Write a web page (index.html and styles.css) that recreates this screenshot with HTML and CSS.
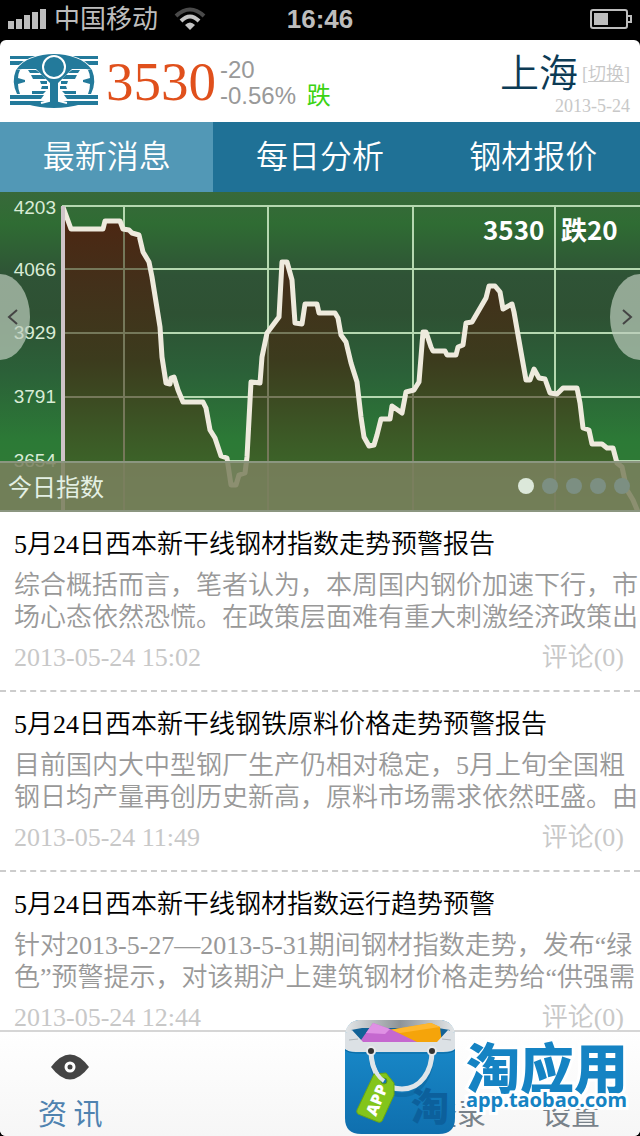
FILE: index.html
```html
<!DOCTYPE html>
<html lang="zh-CN">
<head>
    <meta charset="UTF-8">
    <meta name="viewport" content="width=device-width, initial-scale=1.0">
    <title>钢材指数</title>
    <link rel="stylesheet" href="styles.css">
</head>
<body>
    <div class="status-bar">
        <div class="carrier">
            <svg class="signal" viewBox="0 0 38 20" aria-hidden="true">
                <path d="M0 12h6v8H0zM8 10h6v10H8zM16 6h6v14h-6zM24 3h6v17h-6zM32 0h6v20h-6z" fill="#bdbdbd"/>
            </svg>
            <span>中国移动</span>
            <svg class="wifi" viewBox="0 0 32 24" aria-hidden="true">
                <path d="M2 9Q16-4 30 9" fill="none" stroke="#4a4a4a" stroke-width="4"/>
                <path d="M7 14Q16 5 25 14" fill="none" stroke="#c4c4c4" stroke-width="4"/>
                <path d="M11 18Q16 13 21 18L16 23z" fill="#c4c4c4"/>
            </svg>
        </div>
        <time class="clock">16:46</time>
        <svg class="battery" viewBox="0 0 42 20" aria-hidden="true">
            <rect x="1" y="1" width="36" height="18" rx="2" fill="none" stroke="#bdbdbd" stroke-width="2"/>
            <path d="M4 4h14v12H4z" fill="#bdbdbd"/>
            <path d="M37 7h4v6h-4" fill="none" stroke="#bdbdbd" stroke-width="2"/>
        </svg>
    </div>

    <div class="screen">
        <header class="header">
            <svg class="logo" viewBox="0 0 88 54" aria-label="西本新干线">
                <g fill="#237a9b">
                    <path d="M0 2h88v3H0zM0 7h88v4H0z"/>
                    <ellipse cx="44" cy="27" rx="43" ry="28" fill="#fff"/>
                    <path d="M0 41h34l-3 4H0zM88 41H54l3 4h31zM0 47h88v4H0z"/>
                    <path d="M16 50Q44 43 72 50Q58 54 44 54T16 50z"/>
                    <path d="M6 16C13 5 29 0 44 0s31 5 38 16l-6-1H62L48 29v24h-8V29L26 15H12z"/>
                    <path d="M18 16h8l4 3H20zM21 21h11l4 4H23zM30 27h7v3h-6zM32 32h6v3h-7zM22 37h14l-3 3H22z"/>
                    <path d="M70 16h-8l-4 3h10zM67 21H56l-4 4h13zM58 27h-7v3h6zM56 32h-6v3h7zM66 37H52l3 3h11z"/>
                    <path d="M6 16q-5 12 1 24h3q-2-5-2-10l7-2v-2l-7-2q0-4 2-8zM82 16q5 12-1 24h-3q2-5 2-10l-7-2v-2l7-2q0-4-2-8z"/>
                </g>
                <path d="M39 37v10l-8 2M49 37v10l8 2" fill="none" stroke="#fff" stroke-width="2"/>
                <circle cx="44" cy="13" r="11" fill="#237a9b" stroke="#fff" stroke-width="2"/>
            </svg>
            <strong class="index-value">3530</strong>
            <div class="change">
                <span>-20</span>
                <span>-0.56% <b class="fall">跌</b></span>
            </div>
            <div class="place">
                <div class="city">上海 <span class="switch">[<a href="#city">切换</a>]</span></div>
                <time class="today">2013-5-24</time>
            </div>
        </header>

        <nav class="tabs">
            <a class="tab active" href="#news">最新消息</a>
            <a class="tab" href="#analysis">每日分析</a>
            <a class="tab" href="#prices">钢材报价</a>
        </nav>

        <section class="slider">
            <svg class="chart" viewBox="0 0 640 320" role="img" aria-label="今日指数">
                <defs>
                    <linearGradient id="sky" x1="0" y1="0" x2="0" y2="1">
                        <stop offset="0" stop-color="#38693a"/>
                        <stop offset=".1" stop-color="#2f6c33"/>
                        <stop offset=".26" stop-color="#2f5336"/>
                        <stop offset=".38" stop-color="#2e5133"/>
                        <stop offset=".56" stop-color="#2b6038"/>
                        <stop offset=".78" stop-color="#2c7a36"/>
                        <stop offset="1" stop-color="#347a36"/>
                    </linearGradient>
                    <linearGradient id="area" gradientUnits="userSpaceOnUse" x1="0" y1="15" x2="0" y2="320">
                        <stop offset="0" stop-color="#4e2511"/>
                        <stop offset=".25" stop-color="#43301a"/>
                        <stop offset=".5" stop-color="#3c3b1d"/>
                        <stop offset=".75" stop-color="#3c5926"/>
                        <stop offset="1" stop-color="#3c742d"/>
                    </linearGradient>
                </defs>
                <rect width="640" height="320" fill="url(#sky)"/>
                <path class="grid" d="M62 14H640M62 77H640M62 141H640M62 205H640M62 269H640M124 14V320M268 14V320M413 14V320M555 14V320"/>
                <path class="fill" d="M63 15L71 37H103L105 29H120L123 37 129 38 132 41 139 43 143 60 149 70 152 85 160 135 162 165 166 191 170 192 171 186 174 185 178 198 183 210H203L206 216 210 238 215 246 221 264 227 266 231 293H236L239 283 245 281 247 265 251 190 260 191 262 165 267 141 279 125 282 70H287L292 88 295 131 302 132 305 112H317L319 121H335L338 126 341 143 346 150 351 171 357 190 361 225 364 245 369 254 374 253 377 243 381 227H390L392 214 402 221 406 200 414 198 419 190 423 140H426L431 155 433 159H445L447 163H456L458 155 463 153 466 131 472 130 486 106 489 94H495L500 100 503 117 512 112 514 120 521 160 526 188H530L534 177 539 186 545 187 550 201 557 202 563 196H577L580 211 583 236 589 238 592 252H602L607 256H613L617 271 622 275 627 298 633 308 638 320H63z"/>
                <path class="grid faint" d="M62 77H152M62 141H161M62 205H182M124 37V320M267 141H341M250 205H360M413 198V320M268 141V320M404 205H579M555 202V320M460 141H518"/>
                <path class="curve" d="M63 15L71 37H103L105 29H120L123 37 129 38 132 41 139 43 143 60 149 70 152 85 160 135 162 165 166 191 170 192 171 186 174 185 178 198 183 210H203L206 216 210 238 215 246 221 264 227 266 231 293H236L239 283 245 281 247 265 251 190 260 191 262 165 267 141 279 125 282 70H287L292 88 295 131 302 132 305 112H317L319 121H335L338 126 341 143 346 150 351 171 357 190 361 225 364 245 369 254 374 253 377 243 381 227H390L392 214 402 221 406 200 414 198 419 190 423 140H426L431 155 433 159H445L447 163H456L458 155 463 153 466 131 472 130 486 106 489 94H495L500 100 503 117 512 112 514 120 521 160 526 188H530L534 177 539 186 545 187 550 201 557 202 563 196H577L580 211 583 236 589 238 592 252H602L607 256H613L617 271 622 275 627 298 633 308 638 320"/>
                <path class="axis" d="M63 14V320"/>
                <g class="scale">
                    <text x="56" y="22">4203</text>
                    <text x="56" y="84">4066</text>
                    <text x="56" y="147">3929</text>
                    <text x="56" y="211">3791</text>
                    <text x="56" y="275">3654</text>
                </g>
                <text class="quote" x="483" y="48">3530</text>
                <text class="quote" x="561" y="48">跌20</text>
            </svg>
            <button class="arrow prev" aria-label="上一张">
                <svg viewBox="0 0 12 18" aria-hidden="true"><path d="M10 2L2 9l8 7"/></svg>
            </button>
            <button class="arrow next" aria-label="下一张">
                <svg viewBox="0 0 12 18" aria-hidden="true"><path d="M2 2l8 7-8 7"/></svg>
            </button>
            <div class="caption">
                <span>今日指数</span>
                <div class="dots">
                    <i class="dot on"></i>
                    <i class="dot"></i>
                    <i class="dot"></i>
                    <i class="dot"></i>
                    <i class="dot"></i>
                </div>
            </div>
        </section>

        <main class="news">
            <article class="item">
                <h2>5月24日西本新干线钢材指数走势预警报告</h2>
                <p>综合概括而言，笔者认为，本周国内钢价加速下行，市场心态依然恐慌。在政策层面难有重大刺激经济政策出</p>
                <div class="meta"><time>2013-05-24 15:02</time><span>评论(0)</span></div>
            </article>
            <article class="item">
                <h2>5月24日西本新干线钢铁原料价格走势预警报告</h2>
                <p>目前国内大中型钢厂生产仍相对稳定，5月上旬全国粗钢日均产量再创历史新高，原料市场需求依然旺盛。由</p>
                <div class="meta"><time>2013-05-24 11:49</time><span>评论(0)</span></div>
            </article>
            <article class="item">
                <h2>5月24日西本新干线钢材指数运行趋势预警</h2>
                <p>针对2013-5-27—2013-5-31期间钢材指数走势，发布“绿色”预警提示，对该期沪上建筑钢材价格走势给“供强需</p>
                <div class="meta"><time>2013-05-24 12:44</time><span>评论(0)</span></div>
            </article>
        </main>

        <nav class="toolbar">
            <a class="tool current" href="#info">
                <svg class="eye" viewBox="0 0 38 26" aria-hidden="true">
                    <path d="M0 13Q19-12 38 13Q19 38 0 13z" fill="#444"/>
                    <circle cx="19" cy="13" r="4" fill="#444" stroke="#fff" stroke-width="3"/>
                </svg>
                <span>资 讯</span>
            </a>
            <a class="tool login" href="#login"><span>登录</span></a>
            <a class="tool" href="#settings"><span>设置</span></a>
        </nav>

        <div class="badge">
            <svg class="bag" viewBox="0 0 112 116" aria-hidden="true">
                <defs>
                    <linearGradient id="bagBlue" x1="0" y1="0" x2="0" y2="1">
                        <stop offset="0" stop-color="#1b8fcf"/>
                        <stop offset="1" stop-color="#0f6fae"/>
                    </linearGradient>
                    <linearGradient id="rim" x1="0" y1="0" x2="1" y2="0">
                        <stop offset="0" stop-color="#e4e7e9"/>
                        <stop offset=".5" stop-color="#8d9397"/>
                        <stop offset="1" stop-color="#e4e7e9"/>
                    </linearGradient>
                </defs>
                <path d="M14 1h84q13 3 13 18v80q0 16-16 16H17Q1 115 1 99V19Q1 4 14 1z" fill="url(#bagBlue)"/>
                <path d="M14 1h84q11 2 13 13l-11-2-3 12H16L13 12 1 14Q3 3 14 1z" fill="url(#rim)"/>
                <path d="M7 11l11-2h76l12 2-8 13H16z" fill="#126296"/>
                <path d="M45 11l42-7 9 4 2 16H60z" fill="#f5a40a"/>
                <path d="M45 11l42-7 9 4-40 6z" fill="#ffb72e"/>
                <path d="M17 21L29 4l17 6 29 14H17z" fill="#c568cf"/>
                <path d="M29 4l17 6-5 5-19-1z" fill="#df91e4"/>
                <path d="M1 14l7-3 11 12h74l11-12 7 3v16q-3 3-12 3H12Q4 33 1 30z" fill="#dce1e5"/>
                <path d="M5 21l9-1M98 20l9 1" stroke="#aeb5ba" stroke-width="1"/>
                <path d="M1 31q4 3 11 3h87q9 0 12-3" fill="none" stroke="#0c6aa2" stroke-width="1"/>
                <path d="M27 36c0 20 11 40 31 40 19 0 30-20 30-40" fill="none" stroke="#0c6298" stroke-width="4" opacity=".5"/>
                <path d="M27 32c0 20 11 38 31 38 19 0 30-18 30-38" fill="none" stroke="#dfe5e9" stroke-width="5"/>
                <circle cx="27" cy="32" r="4" fill="#333" stroke="#e8eaec" stroke-width="2"/>
                <circle cx="88" cy="32" r="4" fill="#333" stroke="#e8eaec" stroke-width="2"/>
                <path d="M30 55l12-1 8 10v12L38 102q-2 2-4 1L14 95q-2-2-1-4z" fill="#83c51b" stroke="#6aa613" stroke-width="1"/>
                <circle cx="40" cy="62" r="3" fill="#1577b3" stroke="#5b9712" stroke-width="1"/>
                <path d="M28 43q4 14 12 19" fill="none" stroke="#dfe5e9" stroke-width="4"/>
                <text class="tag" transform="translate(32 98) rotate(-68)">APP</text>
                <text class="tao" x="67" y="101">淘</text>
            </svg>
            <div class="badge-text">
                <span class="badge-name">淘应用</span>
                <span class="badge-url">app.taobao.com</span>
            </div>
        </div>
    </div>
</body>
</html>
```
FILE: styles.css
```css
* {
    box-sizing: border-box;
}
body {
    margin: 0;
    height: 100vh;
    display: flex;
    flex-direction: column;
    background: #000;
    font-family: "Liberation Serif", "Noto Sans CJK SC", serif;
    font-weight: 350;
}
a {
    color: inherit;
    text-decoration: none;
}
svg {
    display: block;
}

/* status bar */
.status-bar {
    height: 40px;
    padding: 0 8px 2px;
    display: grid;
    grid-template-columns: 1fr auto 1fr;
    align-items: center;
    color: #bdbdbd;
    font: 400 26px/38px "Liberation Sans", "Noto Sans CJK SC", sans-serif;
}
.carrier {
    display: flex;
    align-items: center;
    gap: 8px;
}
.signal {
    width: 38px;
}
.wifi {
    width: 32px;
    margin-left: 8px;
}
.clock {
    font-weight: bold;
}
.battery {
    width: 42px;
    justify-self: end;
}

.screen {
    position: relative;
    flex: 1;
    min-height: 0;
    display: flex;
    flex-direction: column;
    overflow: hidden;
    background: #fff;
    border-radius: 6px;
}

/* header */
.header {
    height: 82px;
    flex-shrink: 0;
    padding: 0 10px;
    display: flex;
    align-items: center;
}
.logo {
    width: 88px;
}
.index-value {
    margin-left: 8px;
    color: #e0501c;
    font-size: 55px;
    font-weight: 400;
}
.change {
    display: flex;
    flex-direction: column;
    margin-left: 4px;
    padding-top: 4px;
    color: #999;
    font: 400 24px/26px "Liberation Sans", "Noto Sans CJK SC", sans-serif;
}
.fall {
    margin-left: 4px;
    color: #3bd313;
    font-weight: 400;
}
.place {
    margin-left: auto;
    text-align: right;
    color: #c8c8c8;
    font-size: 18px;
}
.city {
    color: #0c3b55;
    font-size: 39px;
    line-height: 50px;
    display: flex;
    align-items: center;
    gap: 4px;
}
.switch {
    color: #c8c8c8;
    font-size: 18px;
}
.switch a {
    text-decoration: underline;
}
.today {
    display: block;
    line-height: 14px;
}

/* top tabs */
.tabs {
    flex-shrink: 0;
    display: grid;
    grid-template-columns: repeat(3, 1fr);
    background: #1f7196;
}
.tab {
    color: #fff;
    font-size: 32px;
    line-height: 70px;
    text-align: center;
}
.tab.active {
    background: #5298b6;
}

/* slider with index chart */
.slider {
    position: relative;
    flex-shrink: 0;
}
.chart {
    width: 100%;
}
.grid {
    fill: none;
    stroke: #b5d8b0;
    stroke-width: 2;
}
.faint {
    stroke: #75785a;
}
.fill {
    fill: url(#area);
}
.curve {
    fill: none;
    stroke: #eeeadd;
    stroke-width: 5;
    stroke-linejoin: round;
}
.axis {
    stroke: #cfc4c8;
    stroke-width: 4;
}
.scale {
    fill: #d9ecd6;
    font: 400 19px "Liberation Sans", sans-serif;
    text-anchor: end;
}
.quote {
    fill: #fff;
    font: 700 26px "Noto Sans CJK SC", sans-serif;
}
.arrow {
    position: absolute;
    top: 82px;
    width: 30px;
    height: 86px;
    padding: 0;
    border: 0;
    display: flex;
    align-items: center;
    justify-content: center;
    background: rgba(190, 205, 190, 0.7);
}
.arrow svg {
    width: 12px;
    fill: none;
    stroke: #444;
    stroke-width: 2;
}
.prev {
    left: 0;
    padding-right: 4px;
    border-radius: 0 30px 30px 0 / 0 43px 43px 0;
}
.next {
    right: 0;
    padding-left: 4px;
    border-radius: 30px 0 0 30px / 43px 0 0 43px;
}
.caption {
    position: absolute;
    left: 0;
    right: 0;
    bottom: 0;
    height: 51px;
    padding: 0 10px 2px 8px;
    display: flex;
    align-items: center;
    justify-content: space-between;
    border-top: 2px solid #8b9680;
    border-bottom: 2px solid #8b9680;
    background: rgba(124, 128, 94, 0.86);
    color: #e4f0e4;
    font: 400 24px/30px "Noto Sans CJK SC", sans-serif;
}
.dots {
    display: flex;
    gap: 8px;
}
.dot {
    width: 16px;
    height: 16px;
    border-radius: 50%;
    background: #7c8f82;
}
.dot.on {
    background: #dce8da;
}

/* news list */
.news {
    flex: 1;
    min-height: 0;
    overflow: hidden;
}
.item {
    padding: 14px 2px 20px 14px;
    border-bottom: 2px dashed #ccc;
    font-size: 26px;
}
.item h2 {
    margin: 0 0 6px;
    color: #000;
    font-size: 26px;
    font-weight: 350;
    line-height: 38px;
}
.item p {
    margin: 0;
    color: #999;
    line-height: 32px;
}
.meta {
    padding: 12px 14px 0 0;
    display: flex;
    justify-content: space-between;
    color: #c8c8c8;
    line-height: 24px;
}

/* bottom toolbar */
.toolbar {
    height: 106px;
    flex-shrink: 0;
    padding: 0 40px 6px 38px;
    display: flex;
    align-items: flex-end;
    border-top: 2px solid #d6d6d6;
    background: linear-gradient(#fff, #f6f6f6);
    color: #79828a;
    font: 400 29px/36px "Noto Sans CJK SC", sans-serif;
}
.tool {
    display: flex;
    flex-direction: column;
    align-items: center;
    gap: 14px;
}
.current {
    color: #4f83b0;
}
.login {
    margin: 0 56px 0 auto;
}
.eye {
    width: 38px;
}

/* store badge over the toolbar */
.badge {
    position: absolute;
    right: 12px;
    bottom: 1px;
    display: flex;
    align-items: center;
    gap: 10px;
}
.bag {
    width: 112px;
}
.tag {
    fill: #fff;
    font: 800 16px "Open Sans", sans-serif;
}
.tao {
    fill: #0c609c;
    font: 900 38px "Noto Sans CJK SC", sans-serif;
}
.badge-text {
    display: flex;
    flex-direction: column;
    color: #1583c3;
    -webkit-text-stroke: 6px #fff;
    paint-order: stroke fill;
}
.badge-name {
    font: 900 54px/46px "Noto Sans CJK SC", sans-serif;
}
.badge-url {
    font: 700 20px/22px "Noto Sans", sans-serif;
}
```
